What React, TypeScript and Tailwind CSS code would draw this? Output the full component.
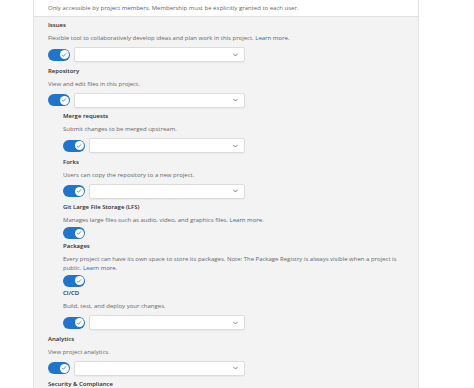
import React from "react";

const font = { fontFamily: '"Open Sans", "Noto Sans", Arial, sans-serif' };

function Toggle() {
  return (
    <div className="relative w-[22px] h-[12px] rounded-full bg-[#1f75cb] shrink-0">
      <div className="absolute right-[1.5px] top-[1.5px] w-[9px] h-[9px] rounded-full bg-white flex items-center justify-center">
        <svg width="6" height="6" viewBox="0 0 16 16">
          <path d="M3.5 8.5 L6.5 11.5 L12.5 4.5" fill="none" stroke="#1f75cb" strokeWidth="2" strokeLinecap="round" strokeLinejoin="round" />
        </svg>
      </div>
    </div>
  );
}

function Select() {
  return (
    <div className="flex-1 h-[15px] bg-white border border-[#dcdcdc] rounded-[2px] shadow-[0_1px_1px_rgba(0,0,0,0.04)] flex items-center justify-end pr-[6px]">
      <svg width="5" height="4" viewBox="0 0 10 6">
        <path d="M1 1 L5 5 L9 1" fill="none" stroke="#666" strokeWidth="1.6" strokeLinecap="round" strokeLinejoin="round" />
      </svg>
    </div>
  );
}

function Section({
  title,
  desc,
  link,
  select = true,
  nested = false,
  last = false,
}: {
  title: string;
  desc?: React.ReactNode;
  link?: boolean;
  select?: boolean;
  nested?: boolean;
  last?: boolean;
}) {
  return (
    <div className={nested ? "pl-[15px]" : ""}>
      <div className="h-[13px] leading-[13px] font-semibold text-[#2b2b2b] text-[6px]">{title}</div>
      {desc && (
        <div className="py-[2px] leading-[9px] text-[#666666] text-[6px] pr-[12px]">
          {desc}
          {link && <span className="text-[#1f68b8]"> Learn more.</span>}
        </div>
      )}
      {last ? null : select ? (
        <div className="flex items-center gap-[4px] pt-[2px] pb-[2.5px]" style={{ width: nested ? 182 : 197 }}>
          <Toggle />
          <Select />
        </div>
      ) : (
        <div className="h-[12.5px] flex items-start">
          <Toggle />
        </div>
      )}
    </div>
  );
}

export default function App() {
  return (
    <div className="w-[474px] h-[388px] bg-white overflow-hidden" style={font}>
      <div className="ml-[33px] w-[386px] h-[388px] border-l border-r border-[#e3e3e3] bg-[#f3f3f3] flex flex-col">
        <div className="h-[17px] shrink-0 bg-white border-b border-[#e2e2e2] pl-[14px] flex items-center text-[6px] text-[#666666]">
          <span>
            Only accessible by <span className="text-[#1f68b8]">project members</span>. Membership must be explicitly granted to each user.
          </span>
        </div>
        <div className="pl-[14px] pt-[2px] shrink-0">
          <Section title="Issues" desc="Flexible tool to collaboratively develop ideas and plan work in this project." link />
          <Section title="Repository" desc="View and edit files in this project." />
          <Section nested title="Merge requests" desc="Submit changes to be merged upstream." />
          <Section nested title="Forks" desc="Users can copy the repository to a new project." />
          <Section nested title="Git Large File Storage (LFS)" desc="Manages large files such as audio, video, and graphics files." link select={false} />
          <Section
            nested
            title="Packages"
            desc="Every project can have its own space to store its packages. Note: The Package Registry is always visible when a project is public."
            link
            select={false}
          />
          <Section nested title="CI/CD" desc="Build, test, and deploy your changes." />
          <Section title="Analytics" desc="View project analytics." />
          <Section title="Security & Compliance" last />
        </div>
      </div>
    </div>
  );
}
